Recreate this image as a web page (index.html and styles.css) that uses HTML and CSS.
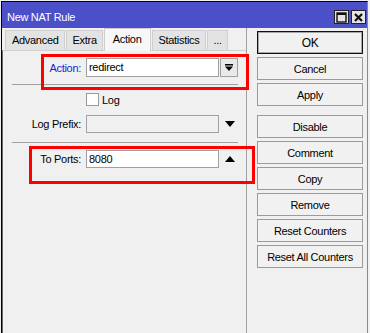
FILE: index.html
```html
<!DOCTYPE html>
<html lang="en">
<head>
    <meta charset="UTF-8">
    <title>New NAT Rule</title>
    <link rel="stylesheet" href="styles.css">
</head>
<body>
    <div class="window">
        <div class="titlebar">
            <span class="title">New NAT Rule</span>
            <div class="tb-buttons">
                <span class="tb-btn">
                    <svg width="11" height="11" viewBox="0 0 11 11"><rect x="1" y="1" width="9" height="9" fill="none" stroke="#111" stroke-width="1.4"/><rect x="1" y="1" width="9" height="2" fill="#111"/></svg>
                </span>
                <span class="tb-btn">
                    <svg width="11" height="11" viewBox="0 0 11 11"><path d="M2 2 L9 9 M9 2 L2 9" stroke="#111" stroke-width="2.2"/></svg>
                </span>
            </div>
        </div>

        <div class="main">
            <div class="left">
                <div class="tabs">
                    <span class="tab">Advanced</span>
                    <span class="tab">Extra</span>
                    <span class="tab active">Action</span>
                    <span class="tab">Statistics</span>
                    <span class="tab">...</span>
                </div>

                <div class="page">
                    <div class="row row-action marked">
                        <label class="lbl blue">Action:</label>
                        <div class="field">redirect</div>
                        <span class="drop-btn">
                            <svg width="8" height="7" viewBox="0 0 8 7"><rect x="0" y="0" width="8" height="1.5" fill="#000"/><path d="M0 2.5 H8 L4 7 Z" fill="#000"/></svg>
                        </span>
                    </div>

                    <div class="sep sep-1"></div>

                    <div class="row row-log">
                        <span class="lbl"></span>
                        <span class="check"></span>
                        <span class="check-text">Log</span>
                    </div>

                    <div class="row row-prefix">
                        <label class="lbl">Log Prefix:</label>
                        <div class="field disabled"></div>
                        <span class="arrow">
                            <svg width="10" height="6" viewBox="0 0 10 6"><path d="M0 0 H10 L5 6 Z" fill="#000"/></svg>
                        </span>
                    </div>

                    <div class="sep sep-2"></div>

                    <div class="row row-ports marked">
                        <label class="lbl">To Ports:</label>
                        <div class="field">8080</div>
                        <span class="arrow">
                            <svg width="10" height="6" viewBox="0 0 10 6"><path d="M0 6 H10 L5 0 Z" fill="#000"/></svg>
                        </span>
                    </div>
                </div>
            </div>

            <div class="right">
                <button class="btn default">OK</button>
                <button class="btn">Cancel</button>
                <button class="btn">Apply</button>
                <button class="btn spaced">Disable</button>
                <button class="btn">Comment</button>
                <button class="btn">Copy</button>
                <button class="btn">Remove</button>
                <button class="btn">Reset Counters</button>
                <button class="btn">Reset All Counters</button>
            </div>
        </div>
    </div>
</body>
</html>
```

FILE: styles.css
```css
* {
    box-sizing: border-box;
}
body {
    margin: 0;
    padding: 0;
    background-color: #f0f0f0;
    font-family: "Liberation Sans", Arial, sans-serif;
    font-size: 11px;
    letter-spacing: -0.3px;
    color: #000;
    overflow: hidden;
}
.window {
    margin: 1px 0 0 1px;
    width: 367px;
    height: 332px;
    border-left: 1px solid #000;
    border-top: 1px solid #000;
    border-right: 1px solid #8a8a8a;
    display: flex;
    flex-direction: column;
}
.titlebar {
    height: 26px;
    flex-shrink: 0;
    background-color: #4b50c8;
    color: #fff;
    display: flex;
    justify-content: space-between;
    align-items: center;
    padding: 4px 1px 0 5px;
}
.title {
    font-size: 11px;
}
.tb-buttons {
    display: flex;
    gap: 2px;
    align-self: flex-end;
    margin-bottom: 4px;
}
.tb-btn {
    width: 15px;
    height: 14px;
    background-color: #e4e4e4;
    border: 1px solid #222;
    display: flex;
    align-items: center;
    justify-content: center;
}
.main {
    flex: 1;
    display: flex;
}
.left {
    width: 245px;
    display: flex;
    flex-direction: column;
    border-right: 1px solid #a0a0a0;
}
.tabs {
    height: 22px;
    display: flex;
    align-items: flex-end;
    padding-left: 3px;
}
.tab {
    height: 20px;
    line-height: 18px;
    padding: 0 5px 0 6px;
    background-color: #e3e3e3;
    border: 1px solid #cfcfcf;
    border-bottom: none;
    margin-right: 1px;
}
.tab.active {
    height: 23px;
    line-height: 21px;
    padding: 0 8px;
    background-color: #f7f7f7;
    margin-bottom: -1px;
    position: relative;
    z-index: 1;
}
.page {
    flex: 1;
    border-left: 1px solid #6a6a6a;
    border-top: 1px solid #cfcfcf;
    padding-top: 7px;
    display: flex;
    flex-direction: column;
}
.row {
    display: flex;
    align-items: center;
    position: relative;
}
.lbl {
    width: 78px;
    text-align: right;
    margin-right: 5px;
    flex-shrink: 0;
}
.blue {
    color: #1c1cd8;
}
.field {
    width: 133px;
    height: 18px;
    line-height: 16px;
    padding-left: 2px;
    background-color: #fff;
    border: 1px solid #a0a0a0;
}
.field.disabled {
    background-color: #f0f0f0;
}
.row-action .field {
    height: 19px;
    line-height: 17px;
}
.drop-btn {
    width: 18px;
    height: 19px;
    margin-left: 1px;
    border: 1px solid #a0a0a0;
    background-color: #e9e9e9;
    display: flex;
    align-items: center;
    justify-content: center;
}
.arrow {
    margin-left: 6px;
    display: flex;
}
.check {
    width: 13px;
    height: 13px;
    background-color: #fff;
    border: 1px solid #999;
}
.check-text {
    margin-left: 3px;
}
.sep {
    height: 1px;
    margin-left: 9px;
    width: 226px;
    background-color: #a0a0a0;
}
.sep-1 {
    margin-top: 7px;
}
.row-log {
    margin-top: 8px;
}
.row-prefix {
    margin-top: 9px;
}
.sep-2 {
    margin-top: 9px;
}
.row-ports {
    margin-top: 7px;
}
.marked::before {
    content: "";
    position: absolute;
    border: 3px solid #f00;
}
.row-action::before {
    left: 38px;
    top: -4px;
    width: 202px;
    height: 30px;
}
.row-ports::before {
    left: 26px;
    top: -4px;
    width: 220px;
    height: 32px;
}
.right {
    flex: 1;
    display: flex;
    flex-direction: column;
    padding: 3px 0 0 10px;
}
.btn {
    width: 106px;
    height: 23px;
    margin-bottom: 3px;
    padding: 0;
    font-family: "Liberation Sans", Arial, sans-serif;
    font-size: 11px;
    letter-spacing: -0.3px;
    color: #000;
    background-color: #f1f1f1;
    border: 1px solid #9b9b9b;
}
.btn.default {
    border: 1px solid #111;
    box-shadow: inset 0 0 0 1px #a8a8a8;
    font-size: 12px;
}
.btn.spaced {
    margin-top: 6px;
}
```
